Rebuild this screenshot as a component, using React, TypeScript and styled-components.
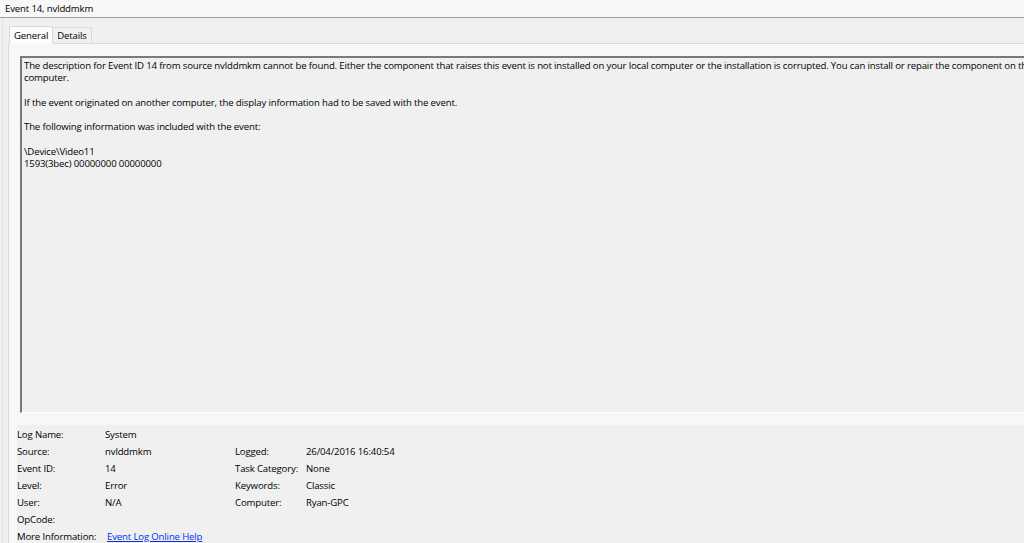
import React from 'react';
import styled, { createGlobalStyle } from 'styled-components';

const GlobalStyle = createGlobalStyle`
    html, body {
        margin: 0;
        padding: 0;
        background: #f0f0f0;
    }
    body {
        font-family: "Open Sans", "Noto Sans", sans-serif;
        font-size: 9.6px;
        letter-spacing: -0.15px;
        color: #000;
    }
`;

// 전체 창
const Window = styled.div`
    width: 1024px;
    height: 543px;
    overflow: hidden;
    display: flex;
    flex-direction: column;
    background: #f0f0f0;
`;

const TitleBar = styled.div`
    height: 17px;
    line-height: 17px;
    padding-left: 5px;
    background: #f7f7f7;
    border-bottom: 1px solid #a0a0a0;
    flex-shrink: 0;
`;

const Body = styled.div`
    flex: 1;
    padding: 7px 0 0 5px;
    margin-left: 2px;
    display: flex;
    flex-direction: column;
    border-left: 1px solid #e3e3e3;
`;

const TabStrip = styled.div`
    display: flex;
    align-items: flex-end;
    height: 18px;
    padding-left: 1px;
    position: relative;
    z-index: 1;
`;

const Tab = styled.div<{ $active?: boolean }>`
    height: ${p => (p.$active ? '18px' : '16px')};
    line-height: ${p => (p.$active ? '17px' : '16px')};
    padding: 0 ${p => (p.$active ? '4px' : '4px')};
    box-sizing: border-box;
    border: 1px solid #d9d9d9;
    border-bottom: ${p => (p.$active ? '1px solid #fcfcfc' : 'none')};
    border-left: ${p => (p.$active ? '1px solid #d9d9d9' : 'none')};
    background: ${p => (p.$active ? '#fcfcfc' : '#f0f0f0')};
    margin-bottom: ${p => (p.$active ? '-1px' : '0')};
`;

const TabPanel = styled.div`
    flex: 1;
    border: 1px solid #d9d9d9;
    border-right: none;
    border-bottom: none;
    background: #f7f7f7;
    padding: 12px 0 0 11px;
`;

const DescriptionBox = styled.div`
    width: 1100px;
    height: 357px;
    box-sizing: border-box;
    background: #f0f0f0;
    border-top: 2px solid #7a7a7a;
    border-left: 2px solid #7a7a7a;
    border-bottom: 1px solid #ffffff;
    padding: 2px 2px;
    line-height: 12.3px;
    white-space: nowrap;
    overflow: hidden;
`;

const Line = styled.div<{ $gap?: boolean }>`
    margin-top: ${p => (p.$gap ? '12.3px' : '0')};
`;

const Details = styled.div`
    display: grid;
    grid-template-columns: 88px 130px 71px 1fr;
    grid-auto-rows: 17px;
    align-items: center;
    margin: 12px 0 0 -3px;
    padding-top: 1px;
    background: #f0f0f0;
`;

const Label = styled.div`
    white-space: nowrap;
`;

const Value = styled.div`
    white-space: nowrap;
`;

const HelpLink = styled.a`
    color: #0033ee;
    text-decoration: underline;
    padding-left: 2px;
    cursor: pointer;
`;

const rows: [string, string, string, string][] = [
    ['Log Name:', 'System', '', ''],
    ['Source:', 'nvlddmkm', 'Logged:', '26/04/2016 16:40:54'],
    ['Event ID:', '14', 'Task Category:', 'None'],
    ['Level:', 'Error', 'Keywords:', 'Classic'],
    ['User:', 'N/A', 'Computer:', 'Ryan-GPC'],
    ['OpCode:', '', '', ''],
];

const App = () => (
    <>
        <GlobalStyle />
        <Window>
            <TitleBar>Event 14, nvlddmkm</TitleBar>
            <Body>
                <TabStrip>
                    <Tab $active>General</Tab>
                    <Tab>Details</Tab>
                </TabStrip>
                <TabPanel>
                    <DescriptionBox>
                        <Line>
                            The description for Event ID 14 from source nvlddmkm cannot be found. Either the component that raises this event is not installed on your local computer or the installation is corrupted. You can install or repair the component on the local
                        </Line>
                        <Line>computer.</Line>
                        <Line $gap>If the event originated on another computer, the display information had to be saved with the event.</Line>
                        <Line $gap>The following information was included with the event:</Line>
                        <Line $gap>\Device\Video11</Line>
                        <Line>1593(3bec) 00000000 00000000</Line>
                    </DescriptionBox>
                    <Details>
                        {rows.map(r => (
                            <React.Fragment key={r[0]}>
                                <Label>{r[0]}</Label>
                                <Value>{r[1]}</Value>
                                <Label>{r[2]}</Label>
                                <Value>{r[3]}</Value>
                            </React.Fragment>
                        ))}
                        <Label>More Information:</Label>
                        <Value>
                            <HelpLink>Event Log Online Help</HelpLink>
                        </Value>
                    </Details>
                </TabPanel>
            </Body>
        </Window>
    </>
);

export default App;
